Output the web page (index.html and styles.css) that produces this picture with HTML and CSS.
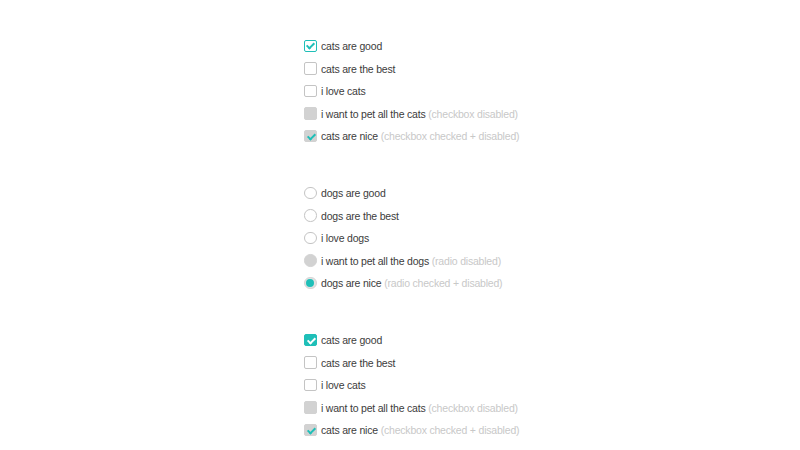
FILE: index.html
```html
<!DOCTYPE html>
<html>
<head>
<meta charset="utf-8">
<link rel="stylesheet" href="styles.css">
</head>
<body>
<main class="page">
  <section class="group">
    <label class="row"><input type="checkbox" class="cb cb-outline" checked><span>cats are good</span></label>
    <label class="row"><input type="checkbox" class="cb"><span>cats are the best</span></label>
    <label class="row"><input type="checkbox" class="cb"><span>i love cats</span></label>
    <label class="row"><input type="checkbox" class="cb" disabled><span>i want to pet all the cats <em class="hint">(checkbox disabled)</em></span></label>
    <label class="row"><input type="checkbox" class="cb" checked disabled><span>cats are nice <em class="hint">(checkbox checked + disabled)</em></span></label>
  </section>
  <section class="group">
    <label class="row"><input type="radio" name="dogs" class="rb"><span>dogs are good</span></label>
    <label class="row"><input type="radio" name="dogs" class="rb"><span>dogs are the best</span></label>
    <label class="row"><input type="radio" name="dogs" class="rb"><span>i love dogs</span></label>
    <label class="row"><input type="radio" name="dogs2" class="rb" disabled><span>i want to pet all the dogs <em class="hint">(radio disabled)</em></span></label>
    <label class="row"><input type="radio" name="dogs3" class="rb" checked disabled><span>dogs are nice <em class="hint">(radio checked + disabled)</em></span></label>
  </section>
  <section class="group">
    <label class="row"><input type="checkbox" class="cb cb-fill" checked><span>cats are good</span></label>
    <label class="row"><input type="checkbox" class="cb"><span>cats are the best</span></label>
    <label class="row"><input type="checkbox" class="cb"><span>i love cats</span></label>
    <label class="row"><input type="checkbox" class="cb" disabled><span>i want to pet all the cats <em class="hint">(checkbox disabled)</em></span></label>
    <label class="row"><input type="checkbox" class="cb" checked disabled><span>cats are nice <em class="hint">(checkbox checked + disabled)</em></span></label>
  </section>
</main>
</body>
</html>
```
FILE: styles.css
```css
html, body {
  margin: 0;
  background: #ffffff;
}
body {
  font-family: "Liberation Sans", Arial, sans-serif;
  font-size: 10.5px;
  letter-spacing: -0.2px;
  color: #3c3c3c;
}
.page {
  padding: 34.75px 0 0 304px;
  display: flex;
  flex-direction: column;
  gap: 34.5px;
}
.group {
  display: flex;
  flex-direction: column;
}
.row {
  display: flex;
  align-items: center;
  height: 22.5px;
  gap: 4.5px;
}
.hint {
  font-style: normal;
  color: #c8c8c8;
}
.cb, .rb {
  -webkit-appearance: none;
  appearance: none;
  margin: 0;
  width: 12.5px;
  height: 12.5px;
  box-sizing: border-box;
  border: 1px solid #c4c4c4;
  background: #fff;
  position: relative;
  flex: none;
}
.cb {
  border-radius: 2px;
}
.cb:checked::after {
  content: "";
  position: absolute;
  left: 3.5px;
  top: 1px;
  width: 3px;
  height: 6px;
  border-right: 2px solid #1fbfb8;
  border-bottom: 2px solid #1fbfb8;
  transform: rotate(45deg);
}
.cb-outline:checked {
  border: 1.5px solid #1fbfb8;
}
.cb-outline:checked::after {
  left: 3px;
  top: 0.5px;
}
.cb-fill:checked {
  background: #1fbfb8;
  border-color: #1fbfb8;
}
.cb-fill:checked::after {
  border-color: #ffffff;
}
.cb:disabled {
  background: #d2d2d2;
  border-color: #d2d2d2;
}
.rb {
  border-radius: 50%;
}
.rb:disabled {
  background: #d2d2d2;
  border-color: #d2d2d2;
}
.rb:checked::after {
  content: "";
  position: absolute;
  left: 1.25px;
  top: 1.25px;
  width: 8px;
  height: 8px;
  border-radius: 50%;
  background: #1fbfb8;
}
.rb:checked:disabled {
  background: #e2e2e2;
  border-color: #d6d6d6;
}
```
